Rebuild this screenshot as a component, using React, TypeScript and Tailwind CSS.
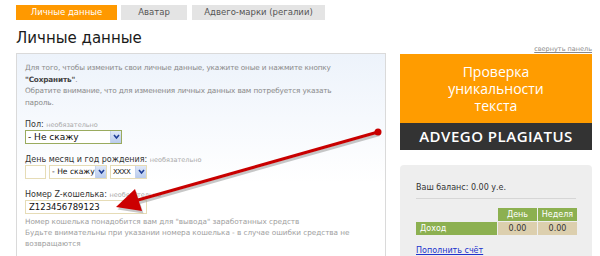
import React from 'react'

const Arrow: React.FC = () => (
  <svg className="w-[9px] h-[9px]" viewBox="0 0 9 9">
    <path d="M2 3 L4.5 6 L7 3" fill="none" stroke="#1f3f99" strokeWidth="1.6" />
  </svg>
)

interface SelectProps {
  value: string
  className?: string
  textClass?: string
  border: string
}

const FakeSelect: React.FC<SelectProps> = ({ value, className, textClass, border }) => (
  <div className={`h-[14px] flex items-stretch bg-white border ${border} ${className ?? ''}`}>
    <div className={`flex-1 pl-[2px] leading-[12px] text-[#111] whitespace-nowrap overflow-hidden ${textClass ?? 'text-[9px]'}`}>
      {value}
    </div>
    <div className="w-[11px] shrink-0 bg-gradient-to-b from-[#dfe8f8] to-[#b9cbec] border-l border-[#c5d3ee] flex items-center justify-center">
      <Arrow />
    </div>
  </div>
)

const Label: React.FC<{ text: string }> = ({ text }) => (
  <div className="h-[11px] leading-[11px] text-[8px] text-[#333]">
    {text} <span className="text-[6.5px] text-[#a8a8a8]">необязательно</span>
  </div>
)

const PointerArrow: React.FC = () => (
  <svg className="absolute left-0 top-0 pointer-events-none" width="600" height="256" viewBox="0 0 600 256">
    <g transform="translate(1.5 2.5)" fill="#9a9a9a" stroke="#9a9a9a" opacity="0.55">
      <line x1="378" y1="132" x2="138" y2="200" strokeWidth="3" />
      <polygon points="116,207 135,189 142,211" stroke="none" />
    </g>
    <line x1="378" y1="132" x2="138" y2="200" stroke="#c80000" strokeWidth="3" />
    <polygon points="116,207 135,189 142,211" fill="#cc0000" />
    <circle cx="378" cy="132" r="3.5" fill="#c80000" />
  </svg>
)

export default function App() {
  return (
    <div className="relative w-[600px] h-[256px] overflow-hidden bg-white font-['DejaVu_Sans',sans-serif]">
      <div className="flex pt-[5px] pl-[16px] text-[8.5px] leading-[15px]">
        <div className="w-[101px] h-[15px] bg-[#ff9900] text-white text-center">Личные данные</div>
        <div className="ml-[4px] w-[66px] h-[15px] bg-[#e4e4e4] text-[#555] text-center">Аватар</div>
        <div className="ml-[5px] w-[133px] h-[15px] bg-[#e4e4e4] text-[#555] text-center">Адвего-марки (регалии)</div>
      </div>

      <div className="flex">
        <div className="ml-[16px] w-[370px] shrink-0">
          <h1 className="pt-[8px] text-[15px] leading-[20px] text-[#1a1a1a]">Личные данные</h1>
          <div className="mt-[5px] h-[260px] border border-[#dadada] bg-gradient-to-b from-[#edf3fb] via-white to-white px-[8px] pt-[8px]">
            <p className="text-[7.3px] leading-[11.7px] tracking-[-0.15px] text-[#8a8a8a]">
              Для того, чтобы изменить свои личные данные, укажите оные и нажмите кнопку
              <br />
              <b className="text-[#444]">"Сохранить"</b>.
              <br />
              Обратите внимание, что для изменения личных данных вам потребуется указать
              <br />
              пароль.
            </p>

            <div className="mt-[10px]">
              <Label text="Пол:" />
              <FakeSelect value="- Не скажу" border="border-[#9aab5e]" className="w-[97px]" />
            </div>

            <div className="mt-[10px]">
              <Label text="День месяц и год рождения:" />
              <div className="flex">
                <div className="w-[21px] h-[14px] border border-[#e6dcb6] bg-white" />
                <FakeSelect value="- Не скажу" textClass="text-[7.6px]" border="border-[#e6dcb6]" className="ml-[3px] w-[58px]" />
                <FakeSelect value="XXXX" textClass="text-[7px] tracking-[-0.5px]" border="border-[#e6dcb6]" className="ml-[3px] w-[37px]" />
              </div>
            </div>

            <div className="mt-[10px]">
              <Label text="Номер Z-кошелька:" />
              <div className="w-[122px] h-[14px] border border-[#e6dcb6] bg-white pl-[3px] text-[8.5px] leading-[12px] text-[#111]">
                Z123456789123
              </div>
            </div>

            <p className="mt-[2px] text-[7.3px] leading-[11px] tracking-[-0.05px] text-[#a0a0a0]">
              Номер кошелька понадобится вам для "вывода" заработанных средств
              <br />
              Будьте внимательны при указании номера кошелька - в случае ошибки средства не
              <br />
              возвращаются
            </p>
          </div>
        </div>

        <div className="ml-[14px] w-[192px] shrink-0 pt-[24px]">
          <div className="h-[10px] text-right text-[6.5px] leading-[10px] text-[#888] underline">свернуть панель</div>
          <div className="h-[69px] bg-[#ff9c00] flex flex-col items-center justify-center text-center text-white font-['Open_Sans',sans-serif] text-[14px] leading-[17px]">
            <span>Проверка</span>
            <span>уникальности</span>
            <span>текста</span>
          </div>
          <div className="h-[27px] bg-[#333333] flex items-center justify-center text-white font-['Open_Sans',sans-serif] font-semibold text-[15px] tracking-[0.5px]">
            ADVEGO PLAGIATUS
          </div>

          <div className="mt-[15px] h-[110px] rounded-[4px] bg-[#eeeeee] px-[16px] pt-[17px]">
            <div className="text-[8px] leading-[12px] text-[#333]">Ваш баланс: 0.00 у.е.</div>
            <div className="mt-[4px] border-t border-[#d6d6d6]" />
            <div className="mt-[9px] grid grid-cols-[81px_39px_39px] gap-[1px] text-[8px] leading-[13px]">
              <div />
              <div className="bg-[#8cb050] text-white text-center">День</div>
              <div className="bg-[#8cb050] text-white text-center">Неделя</div>
              <div className="bg-[#8cb050] text-white pl-[4px]">Доход</div>
              <div className="bg-[#dccfae] text-[#333] text-center">0.00</div>
              <div className="bg-[#dccfae] text-[#333] text-center">0.00</div>
            </div>
            <div className="mt-[10px] text-[8px] leading-[12px] text-[#2233cc] underline">Пополнить счёт</div>
          </div>
        </div>
      </div>

      <PointerArrow />
    </div>
  )
}
